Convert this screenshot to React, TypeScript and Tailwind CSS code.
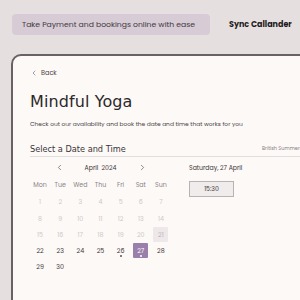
import { ChevronLeft, ChevronRight } from "lucide-react";

const WEEKDAYS = ["Mon", "Tue", "Wed", "Thu", "Fri", "Sat", "Sun"];

// April 2024 starts on a Monday
const WEEKS = [
  [1, 2, 3, 4, 5, 6, 7],
  [8, 9, 10, 11, 12, 13, 14],
  [15, 16, 17, 18, 19, 20, 21],
  [22, 23, 24, 25, 26, 27, 28],
  [29, 30, 0, 0, 0, 0, 0],
];

const Day = ({ n }: { n: number }) => {
  if (!n) return <div className="h-[16.3px]" />;
  const past = n <= 21;
  const selected = n === 27;
  const today = n === 21;
  return (
    <div className="h-[16.3px] flex items-center justify-center">
      <div
        className={`relative w-[15px] h-[15px] flex items-center justify-center rounded-[1px] ${
          selected ? "bg-[#9a7fab] text-white" : today ? "bg-[#efe8ea] text-[#b9b0b4]" : past ? "text-[#cfc8c8]" : "text-[#3b3638]"
        }`}
      >
        {n}
        {(n === 26 || n === 27) && (
          <span
            className={`absolute bottom-[1px] left-1/2 -translate-x-1/2 w-[2px] h-[2px] rounded-full ${
              selected ? "bg-white" : "bg-[#555]"
            }`}
          />
        )}
      </div>
    </div>
  );
};

export default function App() {
  return (
    <div className="w-[300px] h-[300px] bg-[#e6dfdf] overflow-hidden font-['Poppins','Lato',sans-serif]">
      {/* Top bar */}
      <div className="flex items-center pt-[14px] pl-[12px]">
        <div className="w-[198px] h-[21px] rounded-[4px] bg-[#d7cbd6] flex items-center pl-[10px] text-[7.7px] text-[#3e3a3c]">
          Take Payment and bookings online with ease
        </div>
        <div className="ml-[19px] text-[8px] font-bold text-[#1f1c1d]">Sync Callander</div>
      </div>

      {/* Booking card */}
      <div className="mt-[19px] ml-[11px] w-[320px] h-[280px] border-2 border-[#6b6066] rounded-tl-[10px] bg-[#fdf9f7] pl-[17px] pt-[12px]">
        <div className="flex items-center gap-[3px] text-[6.5px] text-[#4a4446]">
          <ChevronLeft size={8} strokeWidth={1.5} />
          <span>Back</span>
        </div>

        <h1 className="mt-[16px] text-[16px] leading-none text-[#2c2829] font-['DejaVu_Sans',sans-serif] tracking-[0.1px]">
          Mindful Yoga
        </h1>
        <p className="mt-[10px] text-[5.9px] text-[#4a4446]">
          Check out our availability and book the date and time that works for you
        </p>

        <div className="mt-[16px] flex items-end border-b border-[#e2dcdc] pb-[3px]">
          <span className="w-[232px] text-[8.2px] text-[#3a3537] font-['DejaVu_Sans',sans-serif] leading-none">
            Select a Date and Time
          </span>
          <span className="whitespace-nowrap text-[5px] text-[#8a8284]">British Summer Time</span>
        </div>

        <div className="flex">
          {/* Calendar */}
          <div className="w-[141px]">
            <div className="mt-[5px] h-[12px] flex items-center justify-center gap-[17px] text-[#3b3638]">
              <ChevronLeft size={9} strokeWidth={1.5} />
              <span className="text-[6.2px] w-[40px] text-center">April&nbsp;&nbsp;2024</span>
              <ChevronRight size={9} strokeWidth={1.5} />
            </div>
            <div className="mt-[4px] grid grid-cols-7 text-[6.3px] text-[#8a8385]">
              {WEEKDAYS.map((d) => (
                <div key={d} className="h-[14px] flex items-center justify-center">
                  {d}
                </div>
              ))}
            </div>
            <div className="mt-[2px] grid grid-cols-7 text-[6.3px]">
              {WEEKS.flat().map((n, i) => (
                <Day key={i} n={n} />
              ))}
            </div>
          </div>

          {/* Times */}
          <div className="ml-[18px] mt-[5px]">
            <div className="h-[12px] flex items-center text-[6.2px] text-[#3b3638]">Saturday, 27 April</div>
            <div className="mt-[7px] w-[45px] h-[16px] border border-[#b9b2b4] bg-[#f1ecec] flex items-center justify-center text-[6.2px] text-[#3b3638]">
              15:30
            </div>
          </div>
        </div>
      </div>
    </div>
  );
}
